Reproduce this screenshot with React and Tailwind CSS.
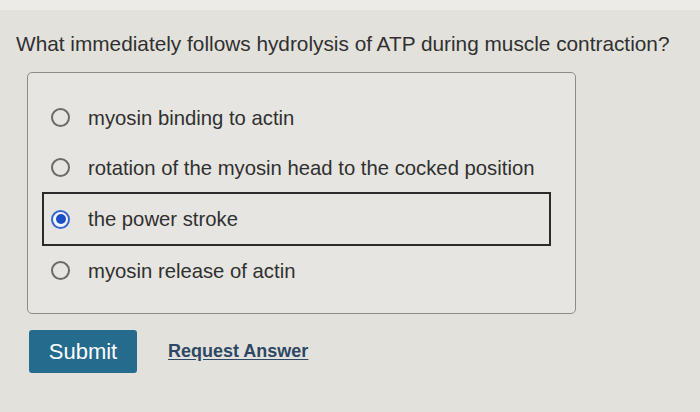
import React from 'react';

const options = [
  { label: 'myosin binding to actin', h: 'h-[51px]' },
  { label: 'rotation of the myosin head to the cocked position', h: 'h-[49px]' },
  { label: 'the power stroke', h: 'h-[54px]', selected: true },
  { label: 'myosin release of actin', h: 'h-[49px]' },
];

const Radio = ({ selected }) =>
  selected ? (
    <div className="w-[19px] h-[19px] rounded-full border-2 border-[#3567cf] bg-[#f4f6fb] flex items-center justify-center shrink-0">
      <div className="w-[10px] h-[10px] rounded-full bg-[#1c4ec6]" />
    </div>
  ) : (
    <div className="w-[19px] h-[19px] rounded-full border-2 border-[#6a6a6a] shrink-0" />
  );

const App = () => {
  return (
    <div
      className="w-[700px] h-[412px] bg-[#e3e1dc] overflow-hidden text-[#303030]"
      style={{ fontFamily: '"Liberation Sans", Arial, sans-serif' }}
    >
      {/* top band */}
      <div className="h-[10px] bg-[#ecebe8]" />

      {/* Question */}
      <p className="mt-[22px] pl-[16px] text-[20.8px] leading-[24px] whitespace-nowrap">
        What immediately follows hydrolysis of ATP during muscle contraction?
      </p>

      {/* Options card */}
      <div className="mt-[16px] ml-[27px] w-[549px] h-[242px] border border-[#8c8b88] rounded-[5px] bg-[#e6e5e1] pl-[14px] pr-[24px] pt-[19px]">
        {options.map((o) => (
          <div
            key={o.label}
            className={`${o.h} flex items-center pl-[7px] border-2 ${
              o.selected ? 'border-[#2b2b2b]' : 'border-transparent'
            }`}
          >
            <Radio selected={o.selected} />
            <span className="ml-[18px] text-[20.3px] leading-[24px] whitespace-nowrap">{o.label}</span>
          </div>
        ))}
      </div>

      {/* Actions */}
      <div className="mt-[16px] ml-[29px] flex items-center">
        <button className="w-[108px] h-[43px] rounded-[3px] bg-[#246b8e] text-white text-[22px] leading-[24px] font-medium">
          Submit
        </button>
        <a className="ml-[31px] text-[18px] font-bold text-[#2d4764] underline underline-offset-2">
          Request Answer
        </a>
      </div>
    </div>
  );
};

export default App;
